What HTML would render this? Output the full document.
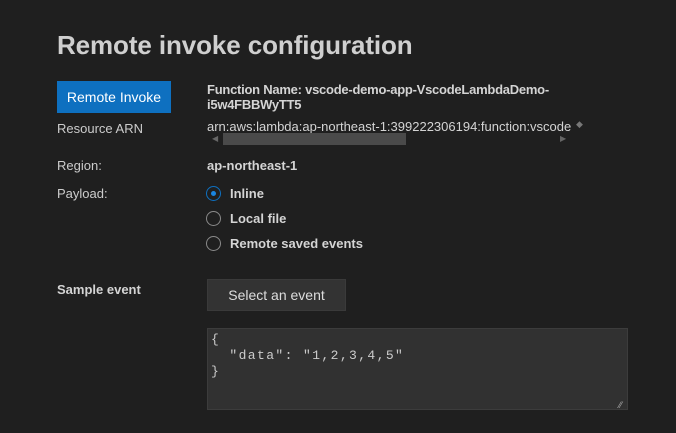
<html><head><style>
body{margin:0;width:676px;height:433px;background:#1f1f1f;font-family:"Liberation Sans",sans-serif;color:#cccccc;position:relative;overflow:hidden}
.a{position:absolute;white-space:nowrap}
.l{font-size:13px;color:#cccccc}
.b{font-weight:bold;font-size:13px;color:#d4d4d4}
.r{position:absolute;width:13px;height:13px;border:1px solid #8a8a8a;border-radius:50%;left:206px}
</style></head><body>
<div class="a" style="left:57px;top:30px;font-size:26px;font-weight:bold;color:#cfcfcf;letter-spacing:-0.1px">Remote invoke configuration</div>
<div class="a" style="left:57px;top:81px;width:114px;height:32px;background:#0e70c0;color:#fff;font-size:14px;line-height:32px;text-align:center">Remote Invoke</div>
<div class="a b" style="left:207px;top:82px;line-height:15px;letter-spacing:-0.25px">Function Name: vscode-demo-app-VscodeLambdaDemo-<br>i5w4FBBWyTT5</div>
<div class="a l" style="left:57px;top:121px">Resource ARN</div>
<div class="a" style="left:207px;top:119px;width:364px;height:14px;overflow:hidden;font-size:13px;color:#d4d4d4">arn:aws:lambda:ap-northeast-1:399222306194:function:vscode-demo-app</div>
<div class="a" style="left:576px;top:119px;font-size:9px;color:#777">◆</div>
<div class="a" style="left:212px;top:134px;font-size:8px;color:#666">◀</div>
<div class="a" style="left:223px;top:133px;width:183px;height:12px;background:#4a4a4a"></div>
<div class="a" style="left:560px;top:134px;font-size:8px;color:#666">▶</div>
<div class="a l" style="left:57px;top:158px">Region:</div>
<div class="a b" style="left:207px;top:158px">ap-northeast-1</div>
<div class="a l" style="left:57px;top:186px">Payload:</div>
<div class="r" style="top:186px;border-color:#0e70c0"><div style="position:absolute;left:4px;top:4px;width:5px;height:5px;border-radius:50%;background:#1a85e0"></div></div>
<div class="a b" style="left:230px;top:186px">Inline</div>
<div class="r" style="top:211px"></div>
<div class="a b" style="left:230px;top:211px">Local file</div>
<div class="r" style="top:236px"></div>
<div class="a b" style="left:230px;top:236px">Remote saved events</div>
<div class="a b" style="left:57px;top:282px">Sample event</div>
<div class="a" style="left:207px;top:279px;width:139px;height:32px;background:#333;border:1px solid #3a3a3a;box-sizing:border-box;font-size:14px;line-height:30px;text-align:center;color:#ddd">Select an event</div>
<div class="a" style="left:207px;top:328px;width:421px;height:82px;background:#313131;border:1px solid #3c3c3c;box-sizing:border-box;font-family:'Liberation Mono',monospace;font-size:13px;letter-spacing:1.4px;line-height:16px;color:#cccccc;padding:3px 0 0 3px;white-space:pre">{
  "data": "1,2,3,4,5"
}</div>
<div class="a" style="left:619px;top:400px;font-size:9px;color:#aaa">⁄⁄</div>
</body></html>
